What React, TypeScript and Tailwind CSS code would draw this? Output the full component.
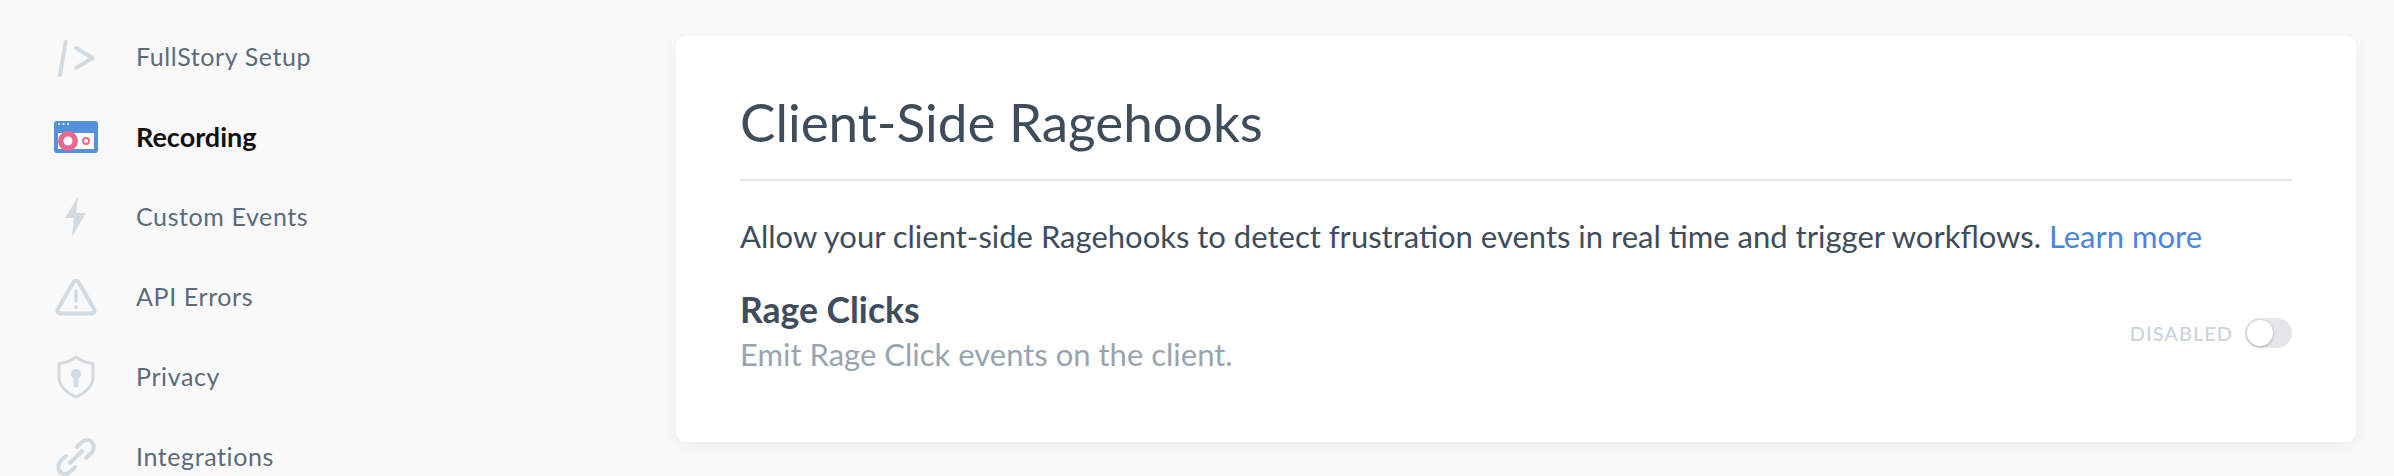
const navItems = [
  { label: 'FullStory Setup', icon: <SetupIcon /> },
  { label: 'Recording', icon: <RecordingIcon />, active: true },
  { label: 'Custom Events', icon: <BoltIcon /> },
  { label: 'API Errors', icon: <WarningIcon /> },
  { label: 'Privacy', icon: <ShieldIcon /> },
  { label: 'Integrations', icon: <LinkIcon /> },
];

function SetupIcon() {
  return (
    <svg width="40" height="40" viewBox="0 0 40 40" fill="none" stroke="#d3dbe2" strokeWidth="4" strokeLinecap="round" strokeLinejoin="round">
      <path d="M9.500 5 L4 38" />
      <path d="M20 11 L36.500 21 L20 31" />
    </svg>
  );
}

function RecordingIcon() {
  return (
    <svg width="44" height="32" viewBox="0 0 44 32">
      <rect width="44" height="32" rx="3" fill="#5590dc" />
      <rect x="4" y="12" width="36" height="16" fill="#fff" />
      <circle cx="5" cy="3" r="1" fill="#fff" />
      <circle cx="9.500" cy="3" r="1" fill="#fff" />
      <circle cx="14" cy="3" r="1" fill="#fff" />
      <circle cx="14" cy="20" r="7.250" fill="none" stroke="#e9688f" strokeWidth="5.500" />
      <circle cx="32" cy="20" r="3" fill="none" stroke="#e9688f" strokeWidth="2" />
    </svg>
  );
}

function BoltIcon() {
  return (
    <svg width="22" height="40" viewBox="0 0 22 40">
      <path d="M13 0 L0 21 L9 21 L7 40 L21 16 L11 16 Z" fill="#d3dbe2" />
    </svg>
  );
}

function WarningIcon() {
  return (
    <svg width="42" height="38" viewBox="0 0 42 38" fill="none">
      <path d="M18 5 C19.500 1.500 22.500 1.500 24 5 L38.500 30 C40.500 33.500 39.500 35.500 36 35.500 L6 35.500 C2.500 35.500 1.500 33.500 3.500 30 Z" stroke="#d3dbe2" strokeWidth="4" strokeLinejoin="round" />
      <path d="M21 13 L21 23" stroke="#d3dbe2" strokeWidth="3.500" strokeLinecap="round" />
      <circle cx="21" cy="29" r="2" fill="#d3dbe2" />
    </svg>
  );
}

function ShieldIcon() {
  return (
    <svg width="38" height="44" viewBox="0 0 38 44" fill="none">
      <path d="M19 2 C24 6 30 8 36 8.500 L36 22 C36 31 28 38 19 42 C10 38 2 31 2 22 L2 8.500 C8 8 14 6 19 2 Z" stroke="#d3dbe2" strokeWidth="3" strokeLinejoin="round" />
      <circle cx="19" cy="19" r="5" fill="#d3dbe2" />
      <path d="M19 19 L19 30" stroke="#d3dbe2" strokeWidth="5" strokeLinecap="round" />
    </svg>
  );
}

function LinkIcon() {
  return (
    <svg width="40" height="40" viewBox="0 0 40 40" fill="none" stroke="#d3dbe2" strokeLinecap="round">
      <path d="M21 10 L25 6 C29 1.500 35 2.500 36.500 6 C38.500 10 37.500 14 34.500 17 L30 21" strokeWidth="4" />
      <path d="M19 30 L15 34 C11 38.500 5 37.500 3.500 34 C1.500 30 2.500 26 5.500 23 L10 19" strokeWidth="4" />
      <path d="M14 26 L26 14" strokeWidth="4" />
    </svg>
  );
}

export default function App() {
  return (
    <div className="flex h-[476px] w-[2394px] overflow-hidden bg-[#f9f9f9] font-['Lato',sans-serif]">
      <nav className="w-[676px] shrink-0 pt-[17px]">
        {navItems.map((item) => (
          <div key={item.label} className="flex h-[80px] items-center">
            <div className="flex w-[136px] shrink-0 justify-center pl-[16px]">{item.icon}</div>
            <span
              className={
                item.active
                  ? 'text-[27px] font-bold text-[#111111]'
                  : 'text-[25px] tracking-[0.6px] text-[#5c6b7a]'
              }
            >
              {item.label}
            </span>
          </div>
        ))}
      </nav>

      <main className="mt-[36px] h-[406px] w-[1680px] shrink-0 rounded-[10px] bg-white px-[64px] shadow-[0_4px_16px_rgba(0,0,0,0.05)]">
        <h1 className="flex h-[145px] items-center border-b-2 border-[#e6eaee] pt-[28px] text-[53px] font-normal leading-none text-[#3e4c5c]">
          Client-Side Ragehooks
        </h1>
        <p className="mt-[35px] text-[31px] leading-[40px] text-[#3e4c5c]">
          Allow your client-side Ragehooks to detect frustration events in real time and trigger workflows.{' '}
          <a className="text-[#4a86d8]">Learn more</a>
        </p>
        <div className="mt-[33px] flex items-center justify-between">
          <div>
            <h2 className="text-[35.500px] font-bold leading-[42px] text-[#3e4c5c]">Rage Clicks</h2>
            <p className="text-[31px] leading-[46px] text-[#98a4af]">Emit Rage Click events on the client.</p>
          </div>
          <div className="flex items-center gap-[12px]">
            <span className="text-[20px] font-medium tracking-[1px] text-[#ccd3da]">DISABLED</span>
            <div className="h-[30px] w-[47px] rounded-full bg-[#e3e7ea] p-[2px]">
              <div className="h-[26px] w-[26px] rounded-full bg-white shadow-[0_1px_3px_rgba(0,0,0,0.25)]" />
            </div>
          </div>
        </div>
      </main>
    </div>
  );
}
